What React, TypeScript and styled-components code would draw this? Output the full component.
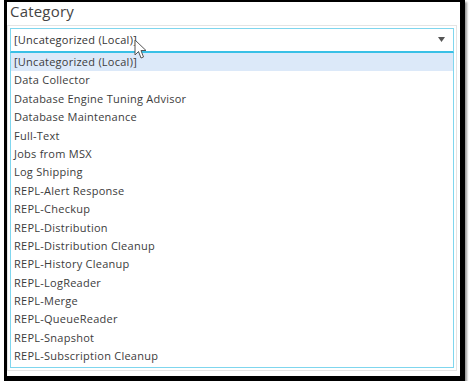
import styled, { createGlobalStyle } from 'styled-components';

const Global = createGlobalStyle`
  html, body {
    margin: 0;
    padding: 0;
    background: #ffffff;
  }
  body {
    font-family: "Open Sans", "Noto Sans", sans-serif;
  }
`;

const Frame = styled.div`
  position: relative;
  box-sizing: border-box;
  margin-left: 4px;
  width: 461px;
  height: 381px;
  background: #ffffff;
  border-style: solid;
  border-color: #000000;
  border-width: 2px 5px 5px 3px;
  box-shadow: 2px 2px 2px #9a9a9a;
  padding: 0 3px 0 3px;
  display: flex;
  flex-direction: column;
  overflow: hidden;
`;

const Label = styled.div`
  height: 30px;
  margin-top: -4px;
  font-size: 15px;
  line-height: 26px;
  color: #444444;
  letter-spacing: 0.2px;
`;

const Field = styled.div`
  width: 444px;
  display: flex;
  flex-direction: column;
  outline: 1px solid #e4e4e4;
  outline-offset: 2px;
`;

const Select = styled.div`
  box-sizing: border-box;
  height: 25px;
  border: 1px solid #7fd6ee;
  border-bottom: 2px solid #39c0e6;
  display: flex;
  align-items: center;
  justify-content: space-between;
  padding: 0 8px 1px 3px;
  font-size: 11px;
  color: #333333;
  letter-spacing: 0.25px;
`;

const List = styled.div`
  box-sizing: border-box;
  height: 315px;
  border: 1px solid #7fd6ee;
  border-top: none;
  display: flex;
  flex-direction: column;
`;

const Item = styled.div<{ $active?: boolean }>`
  height: 18.4px;
  line-height: 17px;
  padding-left: 3px;
  font-size: 11px;
  color: #3c3c3c;
  letter-spacing: 0.25px;
  background: ${(p) => (p.$active ? '#dce9f9' : 'transparent')};
  white-space: nowrap;
`;

const Cursor = styled.svg`
  position: absolute;
  left: 127px;
  top: 37px;
`;

const items = [
  '[Uncategorized (Local)]',
  'Data Collector',
  'Database Engine Tuning Advisor',
  'Database Maintenance',
  'Full-Text',
  'Jobs from MSX',
  'Log Shipping',
  'REPL-Alert Response',
  'REPL-Checkup',
  'REPL-Distribution',
  'REPL-Distribution Cleanup',
  'REPL-History Cleanup',
  'REPL-LogReader',
  'REPL-Merge',
  'REPL-QueueReader',
  'REPL-Snapshot',
  'REPL-Subscription Cleanup',
];

export default function App() {
  return (
    <>
      <Global />
      <Frame>
        <Label>Category</Label>
        <Field>
          <Select>
            <span>[Uncategorized (Local)]</span>
            <svg width="7" height="5" viewBox="0 0 7 5">
              <path d="M0 0 L7 0 L3.5 5 Z" fill="#555555" />
            </svg>
          </Select>
          <List>
            {items.map((t, i) => (
              <Item key={t} $active={i === 0}>
                {t}
              </Item>
            ))}
          </List>
        </Field>
        <Cursor width="14" height="21" viewBox="0 0 14 21">
          <path
            d="M1 1 L1 16 L4.5 12.5 L7 19 L9.5 18 L7 11.5 L12 11.5 Z"
            fill="#ffffff"
            stroke="#555555"
            strokeWidth="1"
            strokeLinejoin="round"
          />
        </Cursor>
      </Frame>
    </>
  );
}
